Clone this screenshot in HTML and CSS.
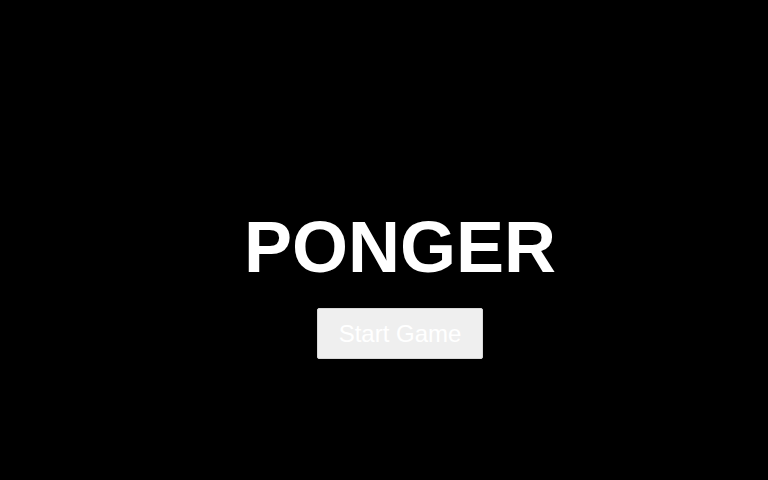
FILE: index.html
```html
<!DOCTYPE html>
<html>
<head>
<meta charset="utf-8">
<link rel="stylesheet" href="styles.css">
</head>
<body>
<div class="screen">
  <h1 class="title">PONGER</h1>
  <button class="start-btn">Start Game</button>
</div>
</body>
</html>
```
FILE: styles.css
```css
html, body {
  margin: 0;
  padding: 0;
  background: #000;
  overflow: hidden;
}
body {
  width: 768px;
  height: 480px;
}
.screen {
  width: 800px;
  display: flex;
  flex-direction: column;
  align-items: center;
  padding-top: 211px;
  font-family: "Liberation Sans", Arial, sans-serif;
}
.title {
  margin: 0;
  font-size: 72px;
  line-height: 72px;
  font-weight: bold;
  color: #fff;
}
.start-btn {
  margin-top: 25px;
  font-family: "Liberation Sans", Arial, sans-serif;
  font-size: 24px;
  line-height: 27px;
  padding: 11px 21px;
  background: #efefef;
  color: #fff;
  border: 1px solid #d8d8d8;
  border-radius: 2px;
}
```
